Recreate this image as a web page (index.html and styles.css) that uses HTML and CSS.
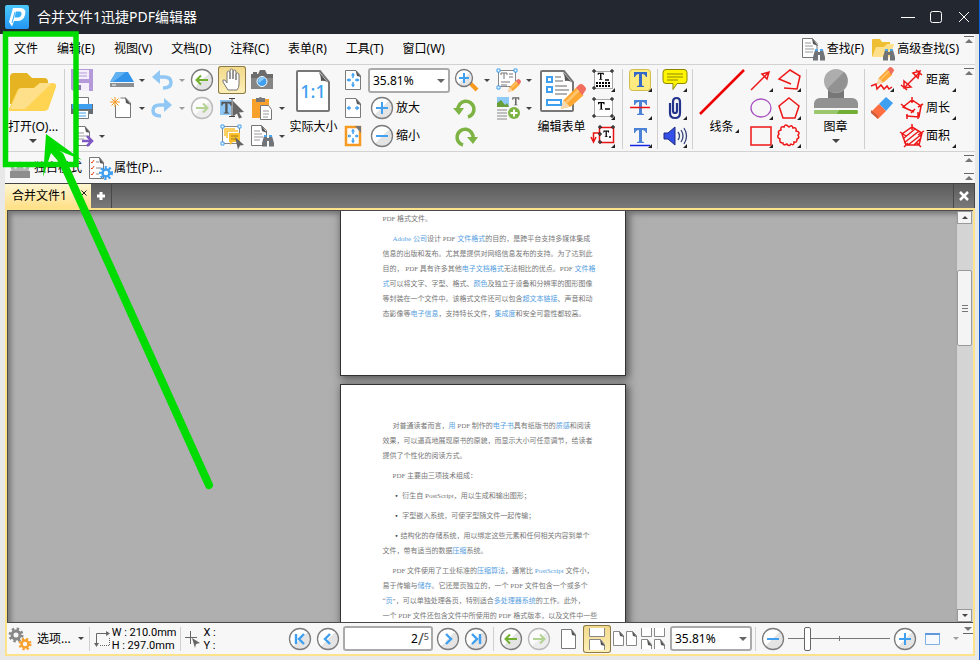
FILE: index.html
```
<!DOCTYPE html>
<html lang="zh-CN">

<head>
    <meta charset="UTF-8">
    <meta name="viewport" content="width=device-width, initial-scale=1.0">
    <title>合并文件1迅捷PDF编辑器</title>
    <link rel="stylesheet" href="styles.css">
</head>

<body>
    <!-- 公用图标 -->
    <svg class="defs" width="0" height="0">
        <defs>
            <linearGradient id="glass" x1="0" y1="0" x2="1" y2="1">
                <stop offset=".5" stop-color="#fff" />
                <stop offset=".5" stop-color="#e4e4e4" />
            </linearGradient>
            <linearGradient id="logo" x1="0" y1="0" x2="0" y2="1">
                <stop offset="0" stop-color="#4cc8fb" />
                <stop offset="1" stop-color="#2396f3" />
            </linearGradient>
            <symbol id="circle" viewBox="0 0 28 28">
                <circle cx="14" cy="14" r="10.500" fill="url(#glass)" stroke="#7c7c7c" stroke-width="1.300" />
            </symbol>
            <symbol id="plus" viewBox="0 0 28 28">
                <use href="#circle" />
                <path d="M8 14h12M14 8v12" stroke="#41a0f0" stroke-width="2" />
            </symbol>
            <symbol id="minus" viewBox="0 0 28 28">
                <use href="#circle" />
                <path d="M8 14h12" stroke="#41a0f0" stroke-width="2" />
            </symbol>
            <symbol id="left" viewBox="0 0 28 28">
                <use href="#circle" />
                <path d="M20 14H10M13 9.500l-4.500 4.500 4.500 4.500" fill="none" stroke="#72b031" stroke-width="2" />
            </symbol>
            <symbol id="right" viewBox="0 0 28 28">
                <use href="#circle" />
                <path d="M8 14h10M15 9.500l4.500 4.500-4.500 4.500" fill="none" stroke="#72b031" stroke-width="2" />
            </symbol>
            <symbol id="paper" viewBox="0 0 28 28">
                <path d="M6.500 4.500h10.500l4.500 5v14H6.500z" fill="#fff" stroke="#7a7a7a" />
                <path d="M16.500 4l5.500 7-4-1z" fill="#555" />
            </symbol>
            <symbol id="glasses" viewBox="0 0 12 12">
                <path d="M2 1h3v2h2V1h3l2 7v3.500H7V6H5v5.500H0V8z" fill="#707478" />
                <path d="M2 0h3v2H2zM7 0h3v2H7z" fill="#4fa8ee" />
            </symbol>
            <symbol id="pencil" viewBox="0 0 20 20">
                <g stroke="none">
                    <path d="M0 20l2-7L12 3l6 6L8 18z" fill="#ffa733" />
                    <path d="M2 13l5 5L0 20z" fill="#f8d9b0" />
                    <path d="M12 3l2-2q2-2 4 0l1 1q2 2 0 4l-2 3z" fill="#f26d5e" />
                </g>
                <path d="M4 15L14 5" stroke="#ffc56e" stroke-width="2" />
            </symbol>
            <symbol id="bigt" viewBox="0 0 28 28">
                <path d="M8 6h13v5h-1q-1-3-4-3v11q0 1 2 1v1h-7v-1q2 0 2-1V8q-3 0-4 3H8z" />
            </symbol>
            <symbol id="eject" viewBox="0 0 10 8">
                <path d="M0 .5h10" stroke="#666" />
                <path d="M1 7l4-4 4 4z" fill="#777" />
            </symbol>
        </defs>
    </svg>

    <header class="title">
        <svg width="24" height="24" viewBox="0 0 24 24">
            <rect width="24" height="24" rx="2" fill="url(#logo)" />
            <path d="M8 3h8q6 1 4 7-1.500 6-8 6H9l-2 5.500L4 17z" fill="#fff" />
            <path d="M11 6.500h4q2 .500 1.500 3T13 12.500h-3.500z" fill="#36aef7" />
            <path d="M10 7L7 18" stroke="#36aef7" />
        </svg>
        <h1>合并文件1迅捷PDF编辑器</h1>
        <div class="win">
            <button type="button" aria-label="最小化"><svg width="14" height="14"><path d="M0 7.500h14" /></svg></button>
            <button type="button" aria-label="最大化"><svg width="14" height="14"><rect x="1.500" y="1.500" width="11" height="11" rx="2" /></svg></button>
            <button type="button" aria-label="关闭"><svg width="14" height="14"><path d="M2 2l10 10M12 2L2 12" /></svg></button>
        </div>
    </header>

    <div class="frame">
        <nav class="menu">
            <a href="#">文件</a>
            <a href="#">编辑(E)</a>
            <a href="#">视图(V)</a>
            <a href="#">文档(D)</a>
            <a href="#">注释(C)</a>
            <a href="#">表单(R)</a>
            <a href="#">工具(T)</a>
            <a href="#">窗口(W)</a>
            <div class="find">
                <button type="button">
                    <svg width="24" height="24" viewBox="0 0 24 24">
                        <path d="M1.500 1.500h10l4.500 5v14H1.500z" fill="#fff" stroke="#777" />
                        <path d="M4 6h6M4 9h8M4 12h9M4 15h8" stroke="#999" />
                        <path d="M11 1l6 8-5-2z" fill="#555" />
                        <use href="#glasses" x="12" y="12" width="12" height="12" />
                    </svg>
                    查找(F)</button>
                <button type="button">
                    <svg width="24" height="24" viewBox="0 0 24 24">
                        <path d="M1 3q0-1 1-1h7l2 3h8v14H1z" fill="#efbf33" />
                        <path d="M1 20L5 10h8l3-3h7l-4 13z" fill="#ffe08a" />
                        <use href="#glasses" x="12" y="12" width="12" height="12" />
                    </svg>
                    高级查找(S)</button>
            </div>
            <svg class="eject" width="10" height="8"><use href="#eject" /></svg>
        </nav>

        <div class="tools">
            <button type="button" class="big open">
                <svg width="50" height="52" viewBox="0 0 50 52">
                    <path d="M2 38V11q0-4 4-4h13l5 5h12q4 0 4 4v22z" fill="#e6b422" />
                    <path d="M1 43l8-18q1-3 5-3h12l6-5h12q5 0 4 4l-7 20q-1 4-5 4H4q-4 0-3-2z" fill="#ffd452" />
                    <path d="M2 43l8-18q1-3 4-3h12l6-5h12L17 43z" fill="#ffe08a" />
                </svg>
                <span>打开(O)...</span>
                <i class="arrow"></i>
            </button>
            <i class="sep"></i>

            <div class="col wide">
                <button type="button" class="ico" aria-label="保存">
                    <svg width="28" height="28" viewBox="0 0 28 28">
                        <path d="M3 3h22v22H5l-2-2z" fill="#b49ad8" />
                        <path d="M7 4h14v9H7zM8 17h13v8H8z" fill="#f3eefa" />
                        <path d="M9 7h10M9 10h10" stroke="#b49ad8" />
                        <path d="M10 19h3v5h-3z" fill="#8a72b0" />
                    </svg>
                </button>
                <button type="button" class="ico" aria-label="打印">
                    <svg width="28" height="28" viewBox="0 0 28 28">
                        <path d="M7.500 3.500h13v7h-13z" fill="#fff" stroke="#777" />
                        <path d="M3 10h22v10H3z" fill="#666d74" />
                        <path d="M4 10h20v5H4z" fill="#3f9ff0" />
                        <path d="M7.500 16.500h13v8h-13z" fill="#fff" stroke="#777" />
                        <path d="M10 19h8M10 22h8" stroke="#41a0f0" />
                    </svg>
                </button>
                <button type="button" class="ico" aria-label="导出">
                    <svg width="28" height="28" viewBox="0 0 28 28">
                        <use href="#paper" />
                        <path d="M9 11h7M9 14h10M9 17h7" stroke="#999" />
                        <path d="M14 19h9M19 14l5 5-5 5" fill="none" stroke="#7e57c2" stroke-width="2.500" />
                    </svg>
                    <i class="arrow"></i>
                </button>
            </div>
            <div class="col wide">
                <button type="button" class="ico" aria-label="扫描">
                    <svg width="28" height="28" viewBox="0 0 28 28">
                        <path d="M8 6h12l6 10H2z" fill="#3294ea" />
                        <path d="M8 6h10L5 16H2z" fill="#62b1f2" />
                        <path d="M2 17h24v4H2z" fill="#8a8f94" />
                        <path d="M4 19h4" stroke="#fff" />
                    </svg>
                    <i class="arrow"></i>
                </button>
                <button type="button" class="ico" aria-label="新建">
                    <svg width="28" height="28" viewBox="0 0 28 28">
                        <path d="M7.500 11v12.500h15V9l-5-5h-5" fill="#fff" stroke="#777" />
                        <path d="M17 3l6 8-5-2z" fill="#555" />
                        <path d="M7 3v10M2 8h10M3.500 4.500l7 7M10.500 4.500l-7 7" stroke="#f79a21" />
                    </svg>
                    <i class="arrow"></i>
                </button>
            </div>
            <div class="col wide">
                <button type="button" class="ico" aria-label="撤销">
                    <svg width="28" height="28" viewBox="0 0 28 28">
                        <path d="M9 11h7q7 0 7 5.500T15 22" fill="none" stroke="#90c7f4" stroke-width="3.500" />
                        <path d="M4 11l8-7v14z" fill="#90c7f4" />
                    </svg>
                    <i class="arrow dim"></i>
                </button>
                <button type="button" class="ico" aria-label="重做">
                    <svg width="28" height="28" viewBox="0 0 28 28">
                        <path d="M19 11h-7q-7 0-7 5.500t8 5.500" fill="none" stroke="#90c7f4" stroke-width="3.500" />
                        <path d="M24 11l-8-7v14z" fill="#90c7f4" />
                    </svg>
                    <i class="arrow dim"></i>
                </button>
            </div>
            <div class="col">
                <button type="button" class="ico" aria-label="后退"><svg width="28" height="28"><use href="#left" /></svg></button>
                <button type="button" class="ico dim" aria-label="前进"><svg width="28" height="28"><use href="#right" /></svg></button>
            </div>
            <div class="col gap">
                <button type="button" class="ico on" aria-label="手形工具">
                    <svg width="28" height="28" viewBox="0 0 28 28">
                        <path d="M10 24l-5-8q-1-3 2-2l2 3V7q0-2 1.500-2T12 7v6-8q0-2 1.500-2T15 5v8-7q0-2 1.500-2T18 6v8-5q0-2 1.500-2T21 9v9q0 4-2 6z" fill="#fff" stroke="#777" />
                    </svg>
                </button>
                <button type="button" class="ico" aria-label="选择文本">
                    <svg width="28" height="28" viewBox="0 0 28 28">
                        <path d="M2 6h11v15H2z" fill="#8ec6f5" />
                        <use href="#bigt" x="-3" y="3" width="22" height="22" fill="#555" />
                        <path d="M11 4.500h6M11 22.500h6M14 5v18" stroke="#444" />
                        <path d="M15 7l11 11-5 .5 3 5-3 1-2-5-4 3z" fill="#666" />
                    </svg>
                </button>
                <button type="button" class="ico" aria-label="选择注释">
                    <svg width="28" height="28" viewBox="0 0 28 28">
                        <path d="M4.500 4.500h17v17h-17z" fill="#fff" stroke="#888" />
                        <path d="M7 14V7h10M9 16V9h11" fill="none" stroke="#fbc02d" stroke-width="1.500" />
                        <path d="M11 11h11v9h-7l-3 3v-3h-1z" fill="#fbc02d" />
                        <path d="M13 14h7M13 17h5" stroke="#a77d12" />
                        <path d="M3 3h3v3H3zM20 3h3v3h-3zM3 20h3v3H3z" fill="#fff" stroke="#3f9ff0" />
                        <path d="M17 15l9 8-4 .500-2 4z" fill="#666" />
                    </svg>
                </button>
            </div>
            <div class="col wide">
                <button type="button" class="ico" aria-label="快照">
                    <svg width="28" height="28" viewBox="0 0 28 28">
                        <path d="M3 8h22v15H3z" fill="#858585" />
                        <path d="M3 8h22v4H3zM10 8l2-4h5l2 4zM5 6h4v2H5z" fill="#6c6c6c" />
                        <circle cx="14" cy="15.500" r="5" fill="#3f9ff0" stroke="#fff" />
                        <path d="M11 17a4 4 0 0 1 6-5z" fill="#8fcbf9" />
                    </svg>
                </button>
                <button type="button" class="ico" aria-label="粘贴">
                    <svg width="28" height="28" viewBox="0 0 28 28">
                        <path d="M4 5h17v19H4z" fill="#f8a12c" />
                        <path d="M8 4h3q1-2 3 0h3v4H8z" fill="#777" />
                        <path d="M12.500 11.500h8l3 4v10h-11z" fill="#fff" stroke="#777" />
                        <path d="M15 17h6M15 20h6M15 23h5" stroke="#999" />
                    </svg>
                    <i class="arrow"></i>
                </button>
                <button type="button" class="ico" aria-label="查找文本">
                    <svg width="28" height="28" viewBox="0 0 28 28">
                        <path d="M3.500 3.500h10l5 5v15h-15z" fill="#fff" stroke="#777" />
                        <path d="M13 3l6 8-5-2z" fill="#555" />
                        <path d="M6 9h6M6 12h8M6 15h9M6 18h6" stroke="#999" />
                        <use href="#glasses" x="14" y="13" width="12" height="12" />
                    </svg>
                    <i class="arrow"></i>
                </button>
            </div>
            <button type="button" class="big">
                <svg width="50" height="52" viewBox="0 0 50 52">
                    <path d="M9 5h22l9 11v28q0 1-1 1H9q-1 0-1-1V6q0-1 1-1z" fill="#fff" stroke="#777" stroke-width="2" />
                    <path d="M29 5l11 13q-3-4-8-3 0-6-3-10z" fill="#555" />
                    <text x="24" y="32" class="ratio">1:1</text>
                </svg>
                <span>实际大小</span>
            </button>
            <div class="col">
                <button type="button" class="ico" aria-label="适合页面">
                    <svg width="28" height="28" viewBox="0 0 28 28">
                        <use href="#paper" />
                        <path d="M14 8v4M14 16v4M8 14h4M16 14h4" stroke="#3f9ff0" stroke-width="1.500" />
                        <path d="M14 6.500l2 3h-4zM14 21.500l2-3h-4zM7.500 14l3-2v4zM20.500 14l-3-2v4z" fill="#3f9ff0" />
                    </svg>
                </button>
                <button type="button" class="ico" aria-label="适合宽度">
                    <svg width="28" height="28" viewBox="0 0 28 28">
                        <use href="#paper" />
                        <path d="M9 14h3M16 14h3" stroke="#3f9ff0" stroke-width="1.500" />
                        <path d="M7.500 14l3-2.500v5zM20.500 14l-3-2.500v5z" fill="#3f9ff0" />
                    </svg>
                </button>
                <button type="button" class="ico" aria-label="适合可见">
                    <svg width="28" height="28" viewBox="0 0 28 28">
                        <path d="M7 5h14v18H7z" fill="#fff" stroke="#f79a21" stroke-width="2.500" />
                        <path d="M14 8v4M14 16v4M9 14h3M16 14h3" stroke="#3f9ff0" stroke-width="1.500" />
                        <path d="M14 6.500l2 3h-4zM14 21.500l2-3h-4zM8.500 14l2-2v4zM19.500 14l-2-2v4z" fill="#3f9ff0" />
                        <path d="M16 4h6v7z" fill="#777" />
                    </svg>
                </button>
            </div>
            <div class="col zoom">
                <span class="select"><select aria-label="缩放比例"><option>35.81%</option></select></span>
                <button type="button" class="ico"><svg width="28" height="28"><use href="#plus" /></svg>放大</button>
                <button type="button" class="ico"><svg width="28" height="28"><use href="#minus" /></svg>缩小</button>
            </div>
            <div class="col wider">
                <button type="button" class="ico" aria-label="放大镜">
                    <svg width="28" height="28" viewBox="0 0 28 28">
                        <path d="M18 17l7 7" stroke="#f79a21" stroke-width="4" />
                        <circle cx="12" cy="12" r="8.500" fill="url(#glass)" stroke="#777" stroke-width="1.300" />
                        <path d="M7 12h10M12 7v10" stroke="#3f9ff0" stroke-width="2" />
                    </svg>
                    <i class="arrow"></i>
                </button>
                <button type="button" class="ico" aria-label="逆时针旋转">
                    <svg width="28" height="28" viewBox="0 0 28 28">
                        <path d="M6 16a8 8 0 1 1 10 7" fill="none" stroke="#7cb342" stroke-width="3.500" />
                        <path d="M1 14h11l-5 7z" fill="#7cb342" />
                    </svg>
                </button>
                <button type="button" class="ico" aria-label="顺时针旋转">
                    <svg width="28" height="28" viewBox="0 0 28 28">
                        <path d="M11 23a8 8 0 1 1 10-7" fill="none" stroke="#7cb342" stroke-width="3.500" />
                        <path d="M26 15H15l6 7z" fill="#7cb342" />
                    </svg>
                </button>
            </div>
            <div class="col wider">
                <button type="button" class="ico" aria-label="编辑内容">
                    <svg width="28" height="28" viewBox="0 0 28 28">
                        <path d="M4.500 4.500h17v16h-17z" fill="#fff" stroke="#888" />
                        <path d="M3 3h3v3H3zM20 3h3v3h-3zM3 20h3v3H3z" fill="#fff" stroke="#3f9ff0" />
                        <path d="M7 9V7h6v2M10 7v6M15 8h4M15 11h4M7 16h9M7 19h6" fill="none" stroke="#777" />
                        <use href="#pencil" x="14" y="13" width="13" height="13" />
                    </svg>
                    <i class="arrow"></i>
                </button>
                <button type="button" class="ico" aria-label="添加内容">
                    <svg width="28" height="28" viewBox="0 0 28 28">
                        <path d="M3 3h12v10H3z" fill="#90caf9" />
                        <path d="M3 13V9l4-3 4 5 2-2 2 4z" fill="#689f38" />
                        <path d="M3 16h10M3 19h10M3 22h10M3 25h10" stroke="#888" />
                        <use href="#bigt" x="14" y="0" width="15" height="15" fill="#666" />
                        <circle cx="20" cy="19" r="6" fill="#7cb342" />
                        <path d="M16.500 19h7M20 15.500v7" stroke="#fff" stroke-width="2" />
                    </svg>
                    <i class="arrow"></i>
                </button>
            </div>
            <button type="button" class="big">
                <svg width="50" height="52" viewBox="0 0 50 52">
                    <path d="M5 5h22l9 11v28q0 1-1 1H5q-1 0-1-1V6q0-1 1-1z" fill="#fff" stroke="#777" stroke-width="2" />
                    <path d="M25 5l11 13q-3-4-8-3 0-6-3-10z" fill="#555" />
                    <path d="M10 11h5v5h-5zM10 21h5v5h-5zM10 34h14v5H10z" fill="none" stroke="#3f9ff0" stroke-width="2" />
                    <path d="M18 11h6M18 15h8M18 20h12M18 24h14M18 28h12" stroke="#999" stroke-width="1.500" />
                    <use href="#pencil" x="24" y="18" width="25" height="25" />
                </svg>
                <span>编辑表单</span>
            </button>
            <div class="col gap">
                <button type="button" class="ico more" aria-label="打字机">
                    <svg width="28" height="28" viewBox="0 0 28 28">
                        <path d="M5.500 5.500h18v17h-18z" fill="#fff" stroke="#555" stroke-dasharray="1 1" />
                        <use href="#bigt" x="5" y="4" width="13" height="13" />
                        <path d="M16 14h4" stroke="#000" stroke-width="1.500" />
                        <path d="M7 17h15M7 20h15" stroke="#000" stroke-width="2" stroke-dasharray="2 1" />
                        <path d="M4 4h2v2H4zM22 4h2v2h-2zM4 21h2v2H4z" fill="#fff" stroke="#000" />
                    </svg>
                </button>
                <button type="button" class="ico more" aria-label="文本框">
                    <svg width="28" height="28" viewBox="0 0 28 28">
                        <path d="M5.500 5.500h18v17h-18z" fill="#fff" stroke="#aaa" />
                        <use href="#bigt" x="5" y="5" width="14" height="14" />
                        <path d="M16 15h5" stroke="#000" stroke-width="1.500" />
                        <path d="M4 4h2v2H4zM22 4h2v2h-2zM4 21h2v2H4zM22 21h2v2h-2z" fill="#fff" stroke="#000" />
                    </svg>
                </button>
                <button type="button" class="ico more" aria-label="标注框">
                    <svg width="28" height="28" viewBox="0 0 28 28">
                        <path d="M10.500 5.500h14v15h-14zM10 11H4.500v8" fill="#fff" stroke="#e81313" stroke-width="1.500" />
                        <path d="M2 15l2.500 5L7 15" fill="none" stroke="#e81313" stroke-width="1.500" />
                        <use href="#bigt" x="11" y="6" width="12" height="12" />
                        <path d="M20 15h2" stroke="#000" stroke-width="1.500" />
                        <path d="M10 4h2v2h-2zM23 4h2v2h-2zM10 19h2v2h-2zM10 11h2v2h-2z" fill="#fff" stroke="#000" />
                    </svg>
                </button>
            </div>
            <i class="sep"></i>
            <div class="col">
                <button type="button" class="ico more" aria-label="高亮">
                    <svg width="28" height="28" viewBox="0 0 28 28">
                        <rect x="3.500" y="3.500" width="21" height="21" rx="3" fill="#fdeb80" stroke="#d2bd4a" />
                        <use href="#bigt" fill="#3468c8" />
                    </svg>
                </button>
                <button type="button" class="ico more" aria-label="删除线">
                    <svg width="28" height="28" viewBox="0 0 28 28">
                        <use href="#bigt" fill="#4c83d6" />
                        <path d="M4 13.500h20" stroke="#e81313" stroke-width="1.500" />
                    </svg>
                </button>
                <button type="button" class="ico more" aria-label="下划线">
                    <svg width="28" height="28" viewBox="0 0 28 28">
                        <use href="#bigt" fill="#4c83d6" />
                        <path d="M4 23.500h20" stroke="#1424e0" stroke-width="1.500" />
                    </svg>
                </button>
            </div>
            <i class="sep"></i>
            <div class="col">
                <button type="button" class="ico more" aria-label="便签">
                    <svg width="28" height="28" viewBox="0 0 28 28">
                        <path d="M5 3.500h18q3 0 3 3v8q0 3-3 3h-7l-4 6v-6H5q-3 0-3-3v-8q0-3 3-3z" fill="#fff500" stroke="#8d8700" />
                        <path d="M6 8h16M6 11h16M6 14h11" stroke="#8d8700" />
                    </svg>
                </button>
                <button type="button" class="ico more" aria-label="附件">
                    <svg width="28" height="28" viewBox="0 0 28 28">
                        <path d="M9 9v10q0 5 5 5t5-5V8q0-4-3.500-4T12 8v9q0 2 2 2t2-2V9" fill="none" stroke="#24348c" stroke-width="2.200" />
                    </svg>
                </button>
                <button type="button" class="ico more" aria-label="声音">
                    <svg width="28" height="28" viewBox="0 0 28 28">
                        <path d="M3 11h4l7-6v18l-7-6H3z" fill="#3450e8" stroke="#1c2a80" />
                        <path d="M17 10q3 4 0 8M20 8q4 6 0 12M23 6q5 8 0 16" fill="none" stroke="#35457c" stroke-width="1.300" />
                    </svg>
                </button>
            </div>
            <i class="sep"></i>
            <button type="button" class="big">
                <svg width="50" height="52" viewBox="0 0 50 52">
                    <path d="M3 48L47 4" stroke="#f00000" stroke-width="2.500" />
                </svg>
                <span class="more">线条</span>
            </button>
            <div class="col">
                <button type="button" class="ico more" aria-label="箭头">
                    <svg width="28" height="28" viewBox="0 0 28 28" class="red"><path d="M4 24L21 7M15 8l7-2-2 7z" /></svg>
                </button>
                <button type="button" class="ico more" aria-label="椭圆">
                    <svg width="28" height="28" viewBox="0 0 28 28"><ellipse cx="14" cy="14" rx="10" ry="9" fill="none" stroke="#a74fc0" stroke-width="1.300" /></svg>
                </button>
                <button type="button" class="ico more" aria-label="矩形">
                    <svg width="28" height="28" viewBox="0 0 28 28" class="red"><path d="M4 5h20v18H4z" /></svg>
                </button>
            </div>
            <div class="col">
                <button type="button" class="ico more" aria-label="折线">
                    <svg width="28" height="28" viewBox="0 0 28 28" class="red"><path d="M16 18L4 13 15 4l10 6-3 13-13-1" /></svg>
                </button>
                <button type="button" class="ico more" aria-label="多边形">
                    <svg width="28" height="28" viewBox="0 0 28 28" class="red"><path d="M14 4l10 8-4 12H8L4 12z" /></svg>
                </button>
                <button type="button" class="ico more" aria-label="云形">
                    <svg width="28" height="28" viewBox="0 0 28 28" class="red"><path d="M14 5q3-3 4 1 4-1 3 3 5 1 2 4 2 3-1 4 0 4-3 3 0 4-3 2-2 3-4 0-4 2-4-1-4 0-3-4-4-2-1-5-2-3 2-4-1-4 3-3 1-4 5 0z" /></svg>
                </button>
            </div>
            <i class="sep"></i>
            <button type="button" class="big stamp">
                <svg width="50" height="52" viewBox="0 0 50 52">
                    <path d="M17 20h16v14H17z" fill="#777" />
                    <circle cx="25" cy="15" r="12" fill="#adadad" />
                    <path d="M33 6A12 12 0 0 1 16 23z" fill="#929292" />
                    <path d="M3 42v-5q1-5 7-5h30q6 0 7 5v5z" fill="#929292" />
                    <rect x="3" y="44" width="44" height="4" rx="1" fill="#9bc76c" />
                    <path d="M28 44h18q1 2 0 4H26z" fill="#72ae35" />
                </svg>
                <span>图章</span>
                <i class="arrow"></i>
            </button>
            <i class="sep"></i>
            <div class="col">
                <button type="button" class="ico more" aria-label="铅笔">
                    <svg width="28" height="28" viewBox="0 0 28 28" class="red">
                        <path d="M3 20l5-2 1 5 4-4 3 4 3-3 2 3 3-2" />
                        <use href="#pencil" x="9" y="1" width="17" height="17" />
                    </svg>
                </button>
                <button type="button" class="ico" aria-label="橡皮擦">
                    <svg width="28" height="28" viewBox="0 0 28 28">
                        <path d="M11 10l7-7 7 6-7 8z" fill="#3f9ff0" />
                        <path d="M11 10l7 7-8 8-7-7z" fill="#ff6e40" />
                        <path d="M3 16l7 6v3l-7-6z" fill="#cf5b3a" />
                    </svg>
                </button>
            </div>
            <div class="col measure">
                <button type="button" class="ico more">
                    <svg width="28" height="28" viewBox="0 0 28 28" class="red"><path d="M7 21L22 6M15 7l7-2-2 7zM6 15l7 6-7 1zM3 19l6 5M18 4l6 5" /></svg>距离</button>
                <button type="button" class="ico more">
                    <svg width="28" height="28" viewBox="0 0 28 28" class="red"><path d="M16 18L5 13l9-7 9 6-2 11-13-1M14 3v6M3 10l6 5M20 13l5-3M20 18v7M9 20v5M13 19l4-4" /></svg>周长</button>
                <button type="button" class="ico more">
                    <svg width="28" height="28" viewBox="0 0 28 28" class="red"><path d="M14 5l10 6-3 12H8L4 12zM6 16l11-9M6 21L21 9M10 23l14-11M16 23l6-6M14 2v6M2 10l6 4M20 13l6-4M6 25l4-4M19 21l4 4" /></svg>面积</button>
            </div>
            <svg class="eject" width="10" height="8"><use href="#eject" /></svg>
        </div>

        <div class="props">
            <button type="button" class="ico">
                <svg width="28" height="28" viewBox="0 0 28 28">
                    <path d="M6 20L4 10l6 5 4-8 4 8 6-5-2 10z" fill="#b5b5b5" />
                    <path d="M4 17h20v7H4z" fill="#8d8d8d" />
                </svg>独占模式</button>
            <button type="button" class="ico">
                <svg width="28" height="28" viewBox="0 0 28 28">
                    <path d="M3.500 3.500h10l4 5v16h-14z" fill="#fff" stroke="#777" />
                    <path d="M13 3l5 7-4-1z" fill="#555" />
                    <path d="M5 8l1 1 2-3M5 14l1 1 2-3M5 20l1 1 2-3" fill="none" stroke="#e64a19" />
                    <path d="M10 8h3M10 14h5M10 20h3" stroke="#888" />
                    <circle cx="20" cy="19" r="5.500" fill="none" stroke="#3f9ff0" stroke-width="3" stroke-dasharray="2 2" />
                    <circle cx="20" cy="19" r="3.500" fill="#fff" stroke="#3f9ff0" stroke-width="2.500" />
                </svg>属性(P)...</button>
            <div class="ejects">
                <svg width="10" height="8"><use href="#eject" /></svg>
                <svg width="10" height="8"><use href="#eject" /></svg>
            </div>
        </div>

        <div class="tabs">
            <div class="tab">合并文件1<button type="button" aria-label="关闭标签"><svg width="6" height="6" viewBox="0 0 6 6"><path d="M.5.5l5 5M5.500.5l-5 5" stroke="#222" /></svg></button></div>
            <button type="button" class="add" aria-label="新标签"><svg width="10" height="10" viewBox="0 0 10 10"><path d="M5 1v8M1 5h8" stroke="#fff" stroke-width="3" /></svg></button>
            <button type="button" class="close" aria-label="关闭文档"><svg width="10" height="10" viewBox="0 0 10 10"><path d="M1 1l8 8M9 1L1 9" stroke="#fff" stroke-width="2.500" /></svg></button>
        </div>

        <div class="work">
            <main class="view">
                <div class="pages">
                    <article class="page first">
                        <p>PDF 格式文件。</p>
                        <p><s></s><a href="#">Adobe 公司</a>设计 PDF <a href="#">文件格式</a>的目的，是跨平台支持多媒体集成<br>
                            信息的出版和发布。尤其是提供对网络信息发布的支持。为了达到此<br>
                            目的， PDF 具有许多其他<a href="#">电子文档格式</a>无法相比的优点。PDF <a href="#">文件格<br>
                            式</a>可以将文字、字型、格式、<a href="#">颜色</a>及独立于设备和分辨率的图形图像<br>
                            等封装在一个文件中。该格式文件还可以包含<a href="#">超文本链接</a>、声音和动<br>
                            态影像等<a href="#">电子信息</a>，支持特长文件，<a href="#">集成度</a>和安全可靠性都较高。</p>
                    </article>
                    <article class="page">
                        <p><s></s>对普通读者而言，<a href="#">用</a> PDF 制作的<a href="#">电子书</a>具有纸版书的<a href="#">质感</a>和阅读<br>
                            效果，可以逼真地展现原书的原貌，而显示大小可任意调节，给读者<br>
                            提供了个性化的阅读方式。</p>
                        <p><s></s>PDF 主要由三项技术组成：</p>
                        <p><s></s><b>•</b> 衍生自 PostScript，用以生成和输出图形；</p>
                        <p><s></s><b>•</b> 字型嵌入系统，可使字型随文件一起传输；</p>
                        <p><s></s><b>•</b>结构化的存储系统，用以绑定这些元素和任何相关内容到单个<br>
                            文件，带有适当的数据<a href="#">压缩</a>系统。</p>
                        <p><s></s>PDF 文件使用了工业标准的<a href="#">压缩算法</a>，通常比 <a href="#">PostScript</a> 文件小，<br>
                            易于传输与<a href="#">储存</a>。它还是页独立的，一个 PDF 文件包含一个或多个<br>
                            “<a href="#">页</a>”，可以单独处理各页，特别适合<a href="#">多处理器系统</a>的工作。此外，<br>
                            一个 PDF 文件还包含文件中所使用的 PDF 格式版本，以及文件中一些</p>
                    </article>
                </div>
                <div class="scroll">
                    <button type="button" aria-label="向上"><i class="arrow up"></i></button>
                    <div class="thumb"></div>
                    <button type="button" aria-label="向下"><i class="arrow"></i></button>
                </div>
            </main>

            <footer class="status">
                <div class="info">
                    <button type="button" class="option">
                        <svg width="26" height="26" viewBox="0 0 26 26" fill="none">
                            <circle cx="9" cy="9" r="6" stroke="#888" stroke-width="3" stroke-dasharray="2.350" />
                            <circle cx="9" cy="9" r="4" stroke="#888" stroke-width="3" />
                            <circle cx="18" cy="18" r="5" stroke="#f9a02b" stroke-width="3" stroke-dasharray="2" />
                            <circle cx="18" cy="18" r="3.500" stroke="#f9a02b" stroke-width="2.500" />
                        </svg>
                        选项...
                        <i class="arrow"></i>
                    </button>
                    <i class="sep"></i>
                    <svg width="18" height="20" viewBox="0 0 18 20" fill="none">
                        <path d="M3.500 16V4.500H14" stroke="#666" />
                        <path d="M13 2l4 2.500-4 2.500zM1 14h5l-2.500 4z" fill="#666" />
                        <path d="M7 16.500h9.500V8" stroke="#666" stroke-dasharray="1 1" />
                    </svg>
                    <div class="size"><p>W : 210.0mm</p><p>H : 297.0mm</p></div>
                    <i class="sep"></i>
                    <svg width="18" height="18" viewBox="0 0 18 18">
                        <path d="M1 7.500h12M6.500 1v13" stroke="#666" />
                        <path d="M8 8l8 5-4 1-1 4z" fill="#666" />
                    </svg>
                    <div class="size"><p>X :</p><p>Y :</p></div>
                </div>
                <button type="button" class="ico" aria-label="首页"><svg width="28" height="28"><use href="#circle" /><path d="M10 9v10M18 9l-5 5 5 5" class="blue" /></svg></button>
                <button type="button" class="ico" aria-label="上一页"><svg width="28" height="28"><use href="#circle" /><path d="M16 9l-5 5 5 5" class="blue" /></svg></button>
                <label class="pageno"><input type="text" value="2" aria-label="页码"><b>/</b><sup>5</sup></label>
                <button type="button" class="ico" aria-label="下一页"><svg width="28" height="28"><use href="#circle" /><path d="M12 9l5 5-5 5" class="blue" /></svg></button>
                <button type="button" class="ico" aria-label="末页"><svg width="28" height="28"><use href="#circle" /><path d="M18 9v10M10 9l5 5-5 5" class="blue" /></svg></button>
                <i class="sep"></i>
                <button type="button" class="ico" aria-label="后退视图"><svg width="28" height="28"><use href="#left" /></svg></button>
                <button type="button" class="ico dim" aria-label="前进视图"><svg width="28" height="28"><use href="#right" /></svg></button>
                <div class="layout">
                    <button type="button" class="ico" aria-label="单页"><svg width="28" height="28" viewBox="0 0 28 28"><path d="M6.500 4.500h10l4 5v14h-14z" fill="#fff" stroke="#7a7a7a" /><path d="M16 4l5 7-4-1z" fill="#555" /></svg></button>
                    <button type="button" class="ico on" aria-label="连续">
                        <svg width="28" height="28" viewBox="0 0 28 28" fill="#fff" stroke="#888">
                            <path d="M6.500 3v8.500h15V3M6.500 25V14.500h11l4 5V25" />
                            <path d="M17 14l5 7-4-1z" fill="#555" stroke="none" />
                        </svg>
                    </button>
                    <button type="button" class="ico" aria-label="双页">
                        <svg width="28" height="28" viewBox="0 0 28 28" fill="#fff" stroke="#888">
                            <path d="M2.500 6.500h6l4 4v10h-10zM15.500 6.500h6l4 4v10h-10z" />
                            <path d="M8 6l5 6-4-1zM21 6l5 6-4-1z" fill="#555" stroke="none" />
                        </svg>
                    </button>
                    <button type="button" class="ico" aria-label="双页连续">
                        <svg width="28" height="28" viewBox="0 0 28 28" fill="#fff" stroke="#888">
                            <path d="M2.500 3v8.500h10V3M15.500 3v8.500h10V3M2.500 24v-9.500h6l4 5V24M15.500 24v-9.500h6l4 5V24" />
                            <path d="M8 14l5 7-4-1zM21 14l5 7-4-1z" fill="#555" stroke="none" />
                        </svg>
                    </button>
                </div>
                <span class="select"><select aria-label="页面缩放"><option>35.81%</option></select></span>
                <i class="sep"></i>
                <button type="button" class="ico" aria-label="缩小页面"><svg width="28" height="28"><use href="#minus" /></svg></button>
                <input type="range" min="0" max="100" value="17" aria-label="缩放">
                <button type="button" class="ico" aria-label="放大页面"><svg width="28" height="28"><use href="#plus" /></svg></button>
                <button type="button" class="ico" aria-label="全屏"><svg width="28" height="28"><path d="M6.500 8.500h14v11h-14z" fill="#f6faff" stroke="#7fb0e6" /><path d="M6 9h15" stroke="#5f98dc" stroke-width="2" /></svg></button>
                <i class="arrow dim"></i>
                <svg class="eject" width="10" height="8"><use href="#eject" /></svg>
            </footer>
        </div>
    </div>

    <!-- 箭头指示 -->
    <svg class="guide" width="220" height="500" viewBox="0 0 220 500">
        <rect x="5.500" y="34" width="70.500" height="130.500" fill="none" stroke="#00dc00" stroke-width="5.500" />
        <path d="M60 156L209 485" stroke="#00dc00" stroke-width="8" stroke-linecap="round" />
        <path d="M46 134L82 160 60 151 66 170 51 153 43 177z" fill="#00dc00" />
    </svg>
</body>

</html>
```
FILE: styles.css
```
* {
    margin: 0;
    padding: 0;
    box-sizing: border-box;
}

html,
body {
    height: 100%;
}

body {
    display: flex;
    flex-direction: column;
    overflow: hidden;
    background: #e8e8e8;
    border-right: 1px solid #0b5fd0;
    color: #000;
    font: 12px/16px "Noto Sans", "Noto Sans CJK SC", sans-serif;
}

button,
input,
select {
    border: 0;
    background: none;
    color: inherit;
    font: inherit;
}

a {
    color: inherit;
    text-decoration: none;
}

svg {
    display: block;
    flex: none;
}

.defs,
.guide {
    position: absolute;
    top: 0;
    left: 0;
    pointer-events: none;
}

/* 标题栏 */
.title {
    display: flex;
    align-items: center;
    flex: none;
    height: 34px;
    padding: 0 8px 0 5px;
    background: #23272f;
    color: #fff;
}

.title h1 {
    margin-left: 8px;
    font-size: 14px;
    font-weight: 400;
}

.title .win {
    display: flex;
    gap: 14px;
    margin-left: auto;
}

.title .win svg {
    fill: none;
    stroke: #fff;
}

.frame {
    display: flex;
    flex-direction: column;
    flex: 1;
    min-height: 0;
    margin: 0 4px 4px 5px;
    background: #f7f7f7;
}

.eject {
    margin-left: auto;
    align-self: flex-start;
}

/* 菜单 */
.menu {
    display: flex;
    align-items: center;
    flex: none;
    gap: 19px;
    height: 31px;
    padding: 0 0 0 9px;
    border-bottom: 1px solid #d2d2d2;
}

.menu .find {
    display: flex;
    gap: 7px;
    margin-left: auto;
}

.menu .find button {
    display: flex;
    align-items: center;
    gap: 2px;
}

.menu .eject {
    margin: 2px 1px 0 -14px;
}

/* 工具栏 */
.tools {
    display: flex;
    flex: none;
    height: 87px;
    padding-top: 1px;
    border-bottom: 1px solid #d2d2d2;
}

.tools .eject {
    margin-top: 2px;
    margin-right: 1px;
}

.sep {
    flex: none;
    width: 1px;
    height: 80px;
    margin: 3px 3px 0;
    background: #cfcfcf;
}

.big {
    display: flex;
    flex-direction: column;
    align-items: center;
    flex: none;
    width: 51px;
    white-space: nowrap;
}

.big span {
    position: relative;
    display: block;
    margin-top: 1px;
}

.big .arrow {
    margin-top: 4px;
    border-width: 4px 4px 0;
}

.open {
    width: 56px;
}

.col {
    flex: none;
    width: 28px;
}

.col.wide {
    width: 40px;
}

.col.wider {
    width: 42px;
}

.col.gap {
    margin: 0 2px;
}

.col.zoom {
    width: 84px;
    margin-left: 1px;
}

.col.measure {
    width: 60px;
    margin-left: 2px;
}

.measure .ico {
    width: 100%;
}

.ico {
    position: relative;
    display: flex;
    align-items: center;
    flex: none;
    height: 28px;
    white-space: nowrap;
}

.ico .arrow {
    margin-left: 3px;
}

.wider .arrow {
    margin-left: 4px;
}

.on {
    background: linear-gradient(#f2d98a, #fdf0b8);
    border-radius: 3px;
    box-shadow: inset 0 0 0 1px #8b7a48;
}

.dim {
    opacity: .5;
}

.arrow {
    flex: none;
    width: 0;
    height: 0;
    border: 3px solid transparent;
    border-top-color: #444;
    border-bottom: 0;
}

.arrow.up {
    border-top: 0;
    border-bottom: 3px solid #444;
}

/* 右下角小三角 */
.more::after {
    content: "";
    position: absolute;
    right: 2px;
    bottom: 2px;
    border-left: 4px solid transparent;
    border-bottom: 4px solid #222;
}

.big .more::after {
    right: -5px;
}

.red {
    fill: none;
    stroke: #ee1717;
    stroke-width: 1.5;
}

.ratio {
    fill: #3f9ff0;
    font-size: 18px;
    font-weight: 500;
    text-anchor: middle;
}

.select {
    position: relative;
    display: block;
    flex: none;
    width: 82px;
    height: 25px;
}

.select select {
    width: 100%;
    height: 100%;
    padding-left: 3px;
    appearance: none;
    background: #fff;
    border: 2px solid #aaa;
    border-radius: 3px;
}

.select::after {
    content: "";
    position: absolute;
    top: 11px;
    right: 5px;
    border: 4px solid transparent;
    border-top-color: #666;
    border-bottom: 0;
    pointer-events: none;
}

.zoom .select {
    margin: 2px 0 1px;
}

/* 属性栏 */
.props {
    display: flex;
    align-items: center;
    flex: none;
    gap: 4px;
    height: 31px;
    padding: 0 1px;
}

.props .ejects {
    display: flex;
    flex-direction: column;
    justify-content: space-between;
    height: 26px;
    margin-left: auto;
}

/* 标签栏 */
.tabs {
    display: flex;
    flex: none;
    height: 25px;
    background: linear-gradient(#5c5c5c, #7a7a7a);
    border-top: 1px solid #444;
}

.tab {
    display: flex;
    align-items: center;
    gap: 14px;
    padding: 0 4px 0 7px;
    background: linear-gradient(#fff5d0, #ffe088);
}

.tab button {
    margin-bottom: 6px;
}

.tabs .add,
.tabs .close {
    padding: 0 5px;
    border-right: 1px solid #484848;
}

.tabs .close {
    margin-left: auto;
    border-left: 1px solid #484848;
}

.work {
    display: flex;
    flex-direction: column;
    flex: 1;
    min-height: 0;
    border: 2px solid #ffe28c;
}

/* 文档 */
.view {
    display: flex;
    flex: 1;
    min-height: 0;
    border: 1px solid #4a4a4a;
    border-right: 0;
    background: #afafaf;
}

.pages {
    flex: 1;
    overflow: hidden;
    box-shadow: inset 3px 3px 5px #777;
}

.page {
    width: 284px;
    margin: 0 auto 10px;
    padding: 34px 34px 53px 42px;
    background: #fff;
    box-shadow: 0 0 0 1px #333, 2px 2px 8px 2px #555;
    color: #777;
    font: 7px/15px "Liberation Serif", "Noto Sans CJK SC", serif;
    white-space: nowrap;
}

.page.first {
    padding-top: 1px;
}

.page p + p {
    margin-top: 5px;
}

.page s {
    display: inline-block;
    width: 10px;
}

.page b {
    display: inline-block;
    width: 8px;
    color: #333;
    text-align: center;
}

.page a {
    color: #57a0e0;
}

.scroll {
    display: flex;
    flex-direction: column;
    justify-content: space-between;
    flex: none;
    width: 16px;
    padding-right: 1px;
    background: #d4d4d4;
}

.scroll button {
    display: flex;
    align-items: center;
    justify-content: center;
    height: 13px;
    background: #f4f4f4;
    border: 1px solid #999;
}

.scroll .thumb {
    height: 76px;
    margin: 46px 0 auto;
    border: 1px solid #999;
    border-radius: 2px;
    background: linear-gradient(#777, #777) center 34px / 6px 1px no-repeat,
        linear-gradient(#777, #777) center 37px / 6px 1px no-repeat,
        linear-gradient(#777, #777) center 40px / 6px 1px no-repeat, #f4f4f4;
}

/* 状态栏 */
.status {
    display: flex;
    align-items: center;
    flex: none;
    height: 31px;
}

.status .sep {
    height: 24px;
    margin: 0 3px;
}

.status .info {
    display: flex;
    align-items: center;
    flex: 1;
}

.option {
    display: flex;
    align-items: center;
    gap: 4px;
}

.option .arrow {
    margin: 0 2px 0 3px;
}

.size {
    padding: 0 1px;
    font-family: Roboto, sans-serif;
    font-size: 11px;
    line-height: 13px;
    white-space: pre;
}

.blue {
    fill: none;
    stroke: #3f9ff0;
    stroke-width: 2.4;
}

.pageno {
    display: flex;
    align-items: center;
    width: 90px;
    height: 25px;
    margin: 0 1px;
    padding-right: 2px;
    background: #fff;
    border: 2px solid #aaa;
    border-radius: 3px;
}

.pageno input {
    flex: 1;
    width: 0;
    text-align: right;
    outline: 0;
}

.pageno b {
    font-size: 16px;
    font-weight: 400;
    color: #555;
}

.pageno sup {
    margin-bottom: 4px;
    color: #444;
    font-size: 9px;
    line-height: 9px;
}

.layout {
    display: flex;
    margin: 0 3px 0 2px;
}

input[type=range] {
    width: 102px;
    height: 25px;
    margin: 0 1px;
    appearance: none;
    background: linear-gradient(#777, #777) center / 100% 1px no-repeat,
        linear-gradient(#777, #777) center / 1px 5px no-repeat;
}

input[type=range]::-webkit-slider-thumb {
    appearance: none;
    width: 7px;
    height: 24px;
    background: #fff;
    border: 1px solid #666;
    border-radius: 2px;
}

.status > .arrow {
    margin-left: 6px;
}

.status .eject {
    margin: 3px 0 0 4px;
    transform: rotate(180deg);
}
```
